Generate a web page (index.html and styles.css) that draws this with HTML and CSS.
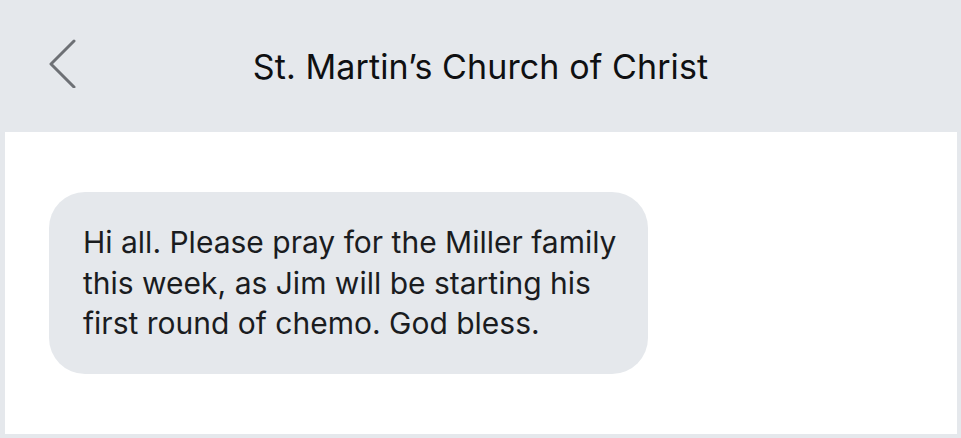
FILE: index.html
```html
<!DOCTYPE html>
<html>
<head>
  <title>St. Martin's Church of Christ</title>
  <link rel="stylesheet" href="styles.css">
</head>
<body>
  <div class="header">
    <div class="back">
      <svg width="30" height="50" viewBox="0 0 30 50">
        <polyline points="25,3 2,26 25,49" fill="none" stroke="#6d7075" stroke-width="3" stroke-linecap="round" stroke-linejoin="round"/>
      </svg>
    </div>
    <div class="title">St. Martin&rsquo;s Church of Christ</div>
  </div>
  <div class="messages">
    <div class="bubble">
      Hi all. Please pray for the Miller family<br>
      this week, as Jim will be starting his<br>
      first round of chemo. God bless.
    </div>
  </div>
</body>
</html>
```

FILE: styles.css
```css
body {
  margin: 0;
  background-color: #e5e8ec;
  font-family: Inter, "Noto Sans", sans-serif;
  color: #1a1c1f;
  height: 438px;
  display: flex;
  flex-direction: column;
}

.header {
  height: 132px;
  display: flex;
  align-items: center;
  justify-content: center;
  position: relative;
}

.back {
  position: absolute;
  left: 49px;
  top: 38px;
}

.title {
  font-size: 34px;
  color: #0f1012;
  letter-spacing: 0.1px;
}

.messages {
  flex: 1;
  background-color: #ffffff;
  margin: 0 4px 4px 5px;
  padding-top: 60px;
  padding-left: 44px;
}

.bubble {
  width: 565px;
  padding: 30px 0 30px 34px;
  background-color: #e5e8ec;
  border-radius: 36px;
  font-size: 30px;
  line-height: 40.5px;
}
```
